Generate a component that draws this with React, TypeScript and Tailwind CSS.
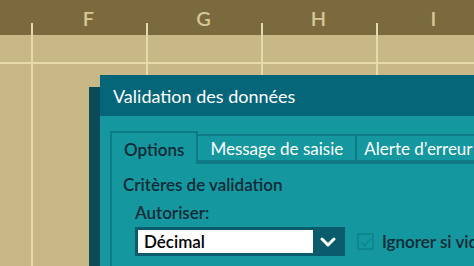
const columns = ['F', 'G', 'H', 'I']

export default function App() {
  return (
    <div className="relative h-[266px] w-[474px] overflow-hidden bg-[#c8b886] font-['Lato',sans-serif]">
      {/* Sheet: column headers + first row */}
      <div className="ml-[-84px] flex">
        {['', ...columns].map((col, i) => (
          <div key={i} className="flex w-[115px] shrink-0 flex-col">
            <div className="flex h-[35px] items-end bg-[#7a6a3d]">
              <div className="h-[12px] w-[2px] bg-[#e6d9ab]" />
              <div className="flex-1 self-center pr-[2px] text-center text-[20px] font-semibold text-[#d7c794]">
                {col}
              </div>
            </div>
            <div className="flex h-[29px] border-b-2 border-[#e6d9ab]">
              <div className="w-[2px] bg-[#e6d9ab]" />
            </div>
            <div className="flex h-[202px]">
              <div className="w-[2px] bg-[#e6d9ab]" />
            </div>
          </div>
        ))}
      </div>

      {/* Dialog */}
      <div className="absolute left-[100px] top-[75px] h-[220px] w-[400px] bg-[#14979f] shadow-[-11px_12px_0_#0b4b57]">
        <div className="flex h-[41px] items-center bg-[#05667a] pl-[13px] pt-[2px] text-[18px] text-white">
          Validation des données
        </div>

        <div className="pl-[10px] pt-[15px]">
          {/* Tabs */}
          <div className="flex items-end">
            <div className="relative z-10 -mb-[2px] flex h-[33px] items-center border-2 border-b-0 border-[#0d7a86] bg-[#14979f] px-[12px] pt-[2px] text-[17px] font-semibold text-[#0e2a36]">
              Options
            </div>
            <div className="flex h-[28px] items-center border-2 border-l-0 border-[#0d7a86] px-[12px] pt-[1px] text-[17px] text-white">
              Message de saisie
            </div>
            <div className="flex h-[28px] items-center whitespace-nowrap border-2 border-l-0 border-[#0d7a86] px-[7px] pt-[1px] text-[17px] text-white">
              Alerte d’erreur
            </div>
          </div>

          {/* Panel */}
          <div className="h-[120px] border-l-2 border-t-2 border-[#0d7a86] pl-[11px] pt-[9px] text-[#0e2a36]">
            <div className="text-[17px] font-semibold leading-[24px]">Critères de validation</div>
            <div className="pl-[12px] pt-[4px]">
              <div className="text-[17px] font-semibold leading-[24px]">Autoriser:</div>
              <div className="mt-[2px] flex items-center">
                <div className="flex h-[29px] w-[210px] border-[3px] border-[#0a5c6c] bg-[#0a5c6c]">
                  <div className="flex flex-1 items-center bg-white pl-[6px] text-[17px] font-semibold text-black">
                    Décimal
                  </div>
                  <div className="flex w-[29px] items-center justify-center">
                    <svg width="16" height="10" viewBox="0 0 16 10" fill="none">
                      <path d="M2 2l6 6 6-6" stroke="white" strokeWidth="3" strokeLinecap="round" strokeLinejoin="round" />
                    </svg>
                  </div>
                </div>
                <div className="ml-[12px] flex h-[17px] w-[17px] items-center justify-center border-2 border-[#0f8791]">
                  <svg width="12" height="10" viewBox="0 0 12 10" fill="none">
                    <path d="M1 5l3.5 3.5L11 1.5" stroke="#0f8791" strokeWidth="1.6" />
                  </svg>
                </div>
                <div className="ml-[8px] whitespace-nowrap text-[17px] font-semibold">Ignorer si vide</div>
              </div>
            </div>
          </div>
        </div>
      </div>
    </div>
  )
}
